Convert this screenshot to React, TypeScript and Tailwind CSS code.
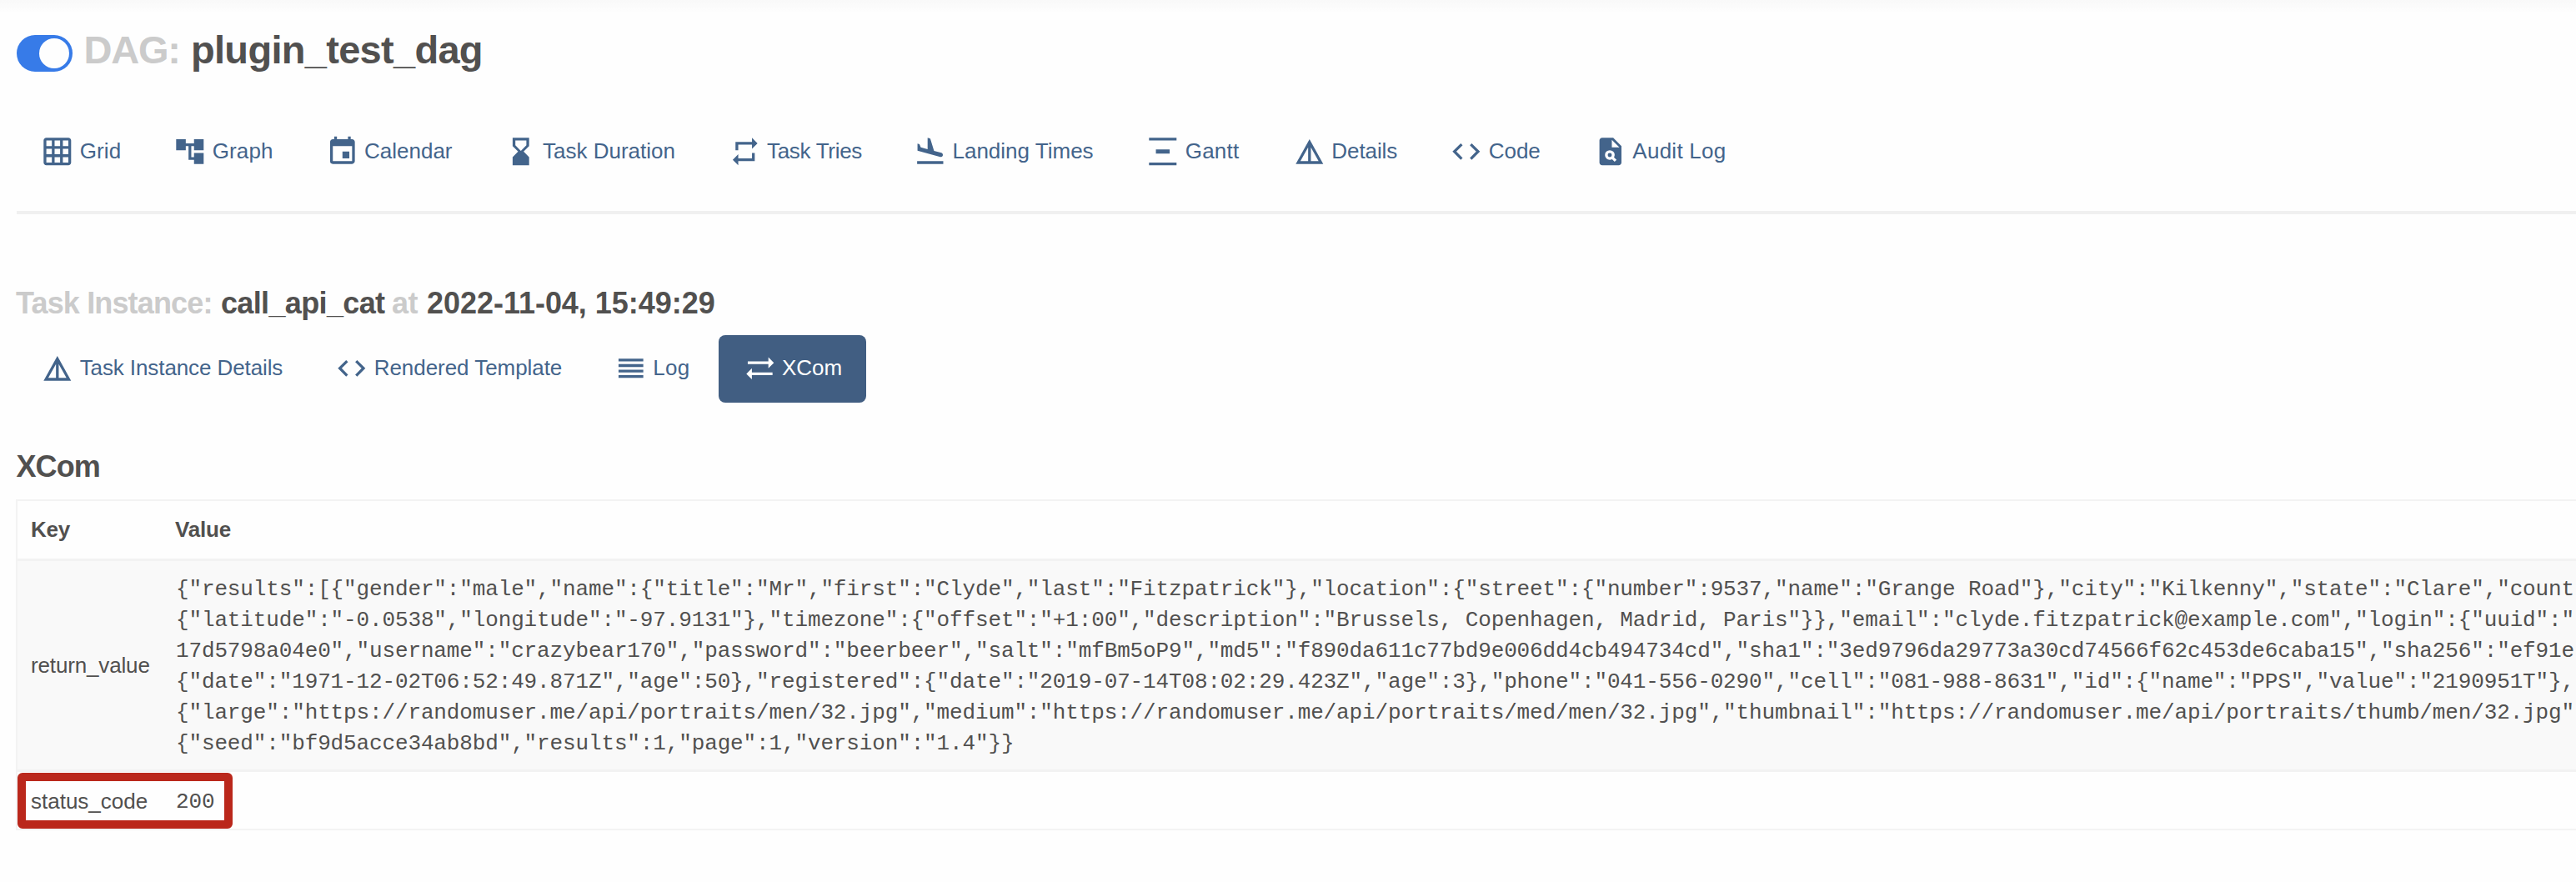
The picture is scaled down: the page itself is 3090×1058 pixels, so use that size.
import React from "react";
import {
  MdGridOn,
  MdAccountTree,
  MdEvent,
  MdHourglassBottom,
  MdRepeat,
  MdFlightLand,
  MdVerticalDistribute,
  MdCode,
  MdPlagiarism,
  MdReorder,
} from "react-icons/md";

const DetailsIcon = ({ className }: { className?: string }) => (
  <svg viewBox="0 0 24 24" fill="currentColor" className={className}>
    <path d="M12 3 2 21h20L12 3zm1 5.92L18.6 19H13V8.92zm-2 0V19H5.4L11 8.92z" />
  </svg>
);

const SyncAltIcon = ({ className }: { className?: string }) => (
  <svg viewBox="0 0 24 24" fill="currentColor" className={className}>
    <path d="m22 8-4-4v3H3v2h15v3l4-4zM2 16l4 4v-3h15v-2H6v-3l-4 4z" />
  </svg>
);

type Item = {
  label: string;
  icon: React.ComponentType<{ className?: string }>;
  width: string;
  tracking?: string;
};

const dagTabs: Item[] = [
  { label: "Grid", icon: MdGridOn, width: "w-[159px]", tracking: "tracking-[0.15px]" },
  { label: "Graph", icon: MdAccountTree, width: "w-[182.3px]", tracking: "tracking-[0.15px]" },
  { label: "Calendar", icon: MdEvent, width: "w-[214px]" },
  { label: "Task Duration", icon: MdHourglassBottom, width: "w-[269px]" },
  { label: "Task Tries", icon: MdRepeat, width: "w-[222.5px]", tracking: "tracking-[-0.3px]" },
  { label: "Landing Times", icon: MdFlightLand, width: "w-[279.2px]" },
  { label: "Gantt", icon: MdVerticalDistribute, width: "w-[175.7px]", tracking: "tracking-[0.25px]" },
  { label: "Details", icon: DetailsIcon, width: "w-[188.3px]", tracking: "tracking-[-0.1px]" },
  { label: "Code", icon: MdCode, width: "w-[172.7px]" },
  { label: "Audit Log", icon: MdPlagiarism, width: "w-[180px]", tracking: "tracking-[0.25px]" },
];

const taskTabs: Item[] = [
  { label: "Task Instance Details", icon: DetailsIcon, width: "w-[353px]", tracking: "tracking-[-0.1px]" },
  { label: "Rendered Template", icon: MdCode, width: "w-[334.5px]", tracking: "tracking-[-0.05px]" },
  { label: "Log", icon: MdReorder, width: "w-[125px]", tracking: "tracking-[0.3px]" },
];

const jsonLines = [
  `{"results":[{"gender":"male","name":{"title":"Mr","first":"Clyde","last":"Fitzpatrick"},"location":{"street":{"number":9537,"name":"Grange Road"},"city":"Kilkenny","state":"Clare","count`,
  `{"latitude":"-0.0538","longitude":"-97.9131"},"timezone":{"offset":"+1:00","description":"Brussels, Copenhagen, Madrid, Paris"}},"email":"clyde.fitzpatrick@example.com","login":{"uuid":"`,
  `17d5798a04e0","username":"crazybear170","password":"beerbeer","salt":"mfBm5oP9","md5":"f890da611c77bd9e006dd4cb494734cd","sha1":"3ed9796da29773a30cd74566f62c453de6caba15","sha256":"ef91e`,
  `{"date":"1971-12-02T06:52:49.871Z","age":50},"registered":{"date":"2019-07-14T08:02:29.423Z","age":3},"phone":"041-556-0290","cell":"081-988-8631","id":{"name":"PPS","value":"2190951T"},`,
  `{"large":"https://randomuser.me/api/portraits/men/32.jpg","medium":"https://randomuser.me/api/portraits/med/men/32.jpg","thumbnail":"https://randomuser.me/api/portraits/thumb/men/32.jpg"`,
  `{"seed":"bf9d5acce34ab8bd","results":1,"page":1,"version":"1.4"}}`,
];

const Tab = ({ item }: { item: Item }) => {
  const Icon = item.icon;
  return (
    <a className={`flex shrink-0 items-center gap-[6.8px] ${item.width}`}>
      <Icon className="mb-[2px] size-[39.6px] shrink-0" />
      <span className={`pb-0.5 ${item.tracking ?? ""}`}>{item.label}</span>
    </a>
  );
};

export default function App() {
  return (
    <div className="h-[1058px] w-full overflow-hidden bg-[#fefefe] font-['Liberation_Sans',Arial,sans-serif] text-[26px] text-[#51504f]">
      <div className="h-4 bg-linear-to-b from-[#f9f9f9] to-[#fefefe]" />

      <header className="flex h-[96px] items-start pl-5 pt-[26px]">
        <div className="mr-[13.5px] flex h-11 w-[67px] shrink-0 justify-end rounded-full bg-[#377be8] p-1">
          <div className="size-9 rounded-full bg-[#fefefe]" />
        </div>
        <h3 className="-mt-[9px] flex text-[47px] leading-[54px] font-bold whitespace-pre">
          <span className="w-[128.5px] tracking-[-1.2px] text-[#cbcbcb]">DAG:</span>
          <span className="tracking-[-0.7px]">plugin_test_dag</span>
        </h3>
      </header>

      <nav className="flex h-[141px] items-center pl-[49.3px] whitespace-nowrap text-[#43648b]">
        {dagTabs.map((t) => (
          <Tab key={t.label} item={t} />
        ))}
      </nav>
      <div className="ml-5 h-1 bg-[#f0f0f0]" />

      <h4 className="mt-[86px] flex pl-[19px] text-[36px] leading-[42px] font-bold whitespace-pre">
        <span className="w-[246px] tracking-[-0.85px] text-[#cbcbcb]">Task Instance:</span>
        <span className="w-[205px] tracking-[-0.65px]">call_api_cat</span>
        <span className="w-[42px] tracking-[-0.6px] text-[#cbcbcb]">at</span>
        <span className="tracking-[-0.03px]">2022-11-04, 15:49:29</span>
      </h4>

      <nav className="mt-[17px] flex h-[81px] items-center pl-[49.3px] whitespace-nowrap text-[#43648b]">
        {taskTabs.map((t) => (
          <Tab key={t.label} item={t} />
        ))}
        <a className="flex h-full w-[177.5px] items-center gap-[6.5px] rounded-lg bg-[#415e82] pl-[30px] text-white">
          <SyncAltIcon className="mb-[2px] size-[39.6px]" />
          <span className="pb-0.5">XCom</span>
        </a>
      </nav>

      <h3 className="mt-[56px] pl-[19.5px] text-[36px] leading-[42px] font-bold tracking-[-0.9px]">XCom</h3>

      <div className="relative mt-[18px] ml-[19px] border-y-2 border-l-2 border-[#f3f3f3]">
        <div className="flex h-[69px] items-center pl-[16px] font-bold">
          <div className="w-[173px] tracking-[-0.3px]">Key</div>
          <div className="tracking-[-0.2px]">Value</div>
        </div>
        <div className="flex h-[256px] items-center border-y-[3px] border-[#f2f2f2] bg-[#f9f9f9] pl-[16px]">
          <div className="w-[174px] shrink-0 tracking-[-0.15px]">return_value</div>
          <div className="pt-1 font-['Liberation_Mono','Courier_New',monospace] leading-[36.85px] whitespace-pre">
            {jsonLines.map((line) => (
              <div key={line} className="tracking-[-0.135px]">
                {line}
              </div>
            ))}
          </div>
        </div>
        <div className="flex h-[68px] items-center pl-[16px]">
          <div className="w-[174px] shrink-0 pt-0.5">status_code</div>
          <div className="pt-1 font-['Liberation_Mono','Courier_New',monospace] tracking-[-0.135px]">200</div>
        </div>
        <div className="absolute bottom-0 left-0 h-[67px] w-[258px] rounded-md border-[10px] border-[#ba271b]" />
      </div>
    </div>
  );
}
